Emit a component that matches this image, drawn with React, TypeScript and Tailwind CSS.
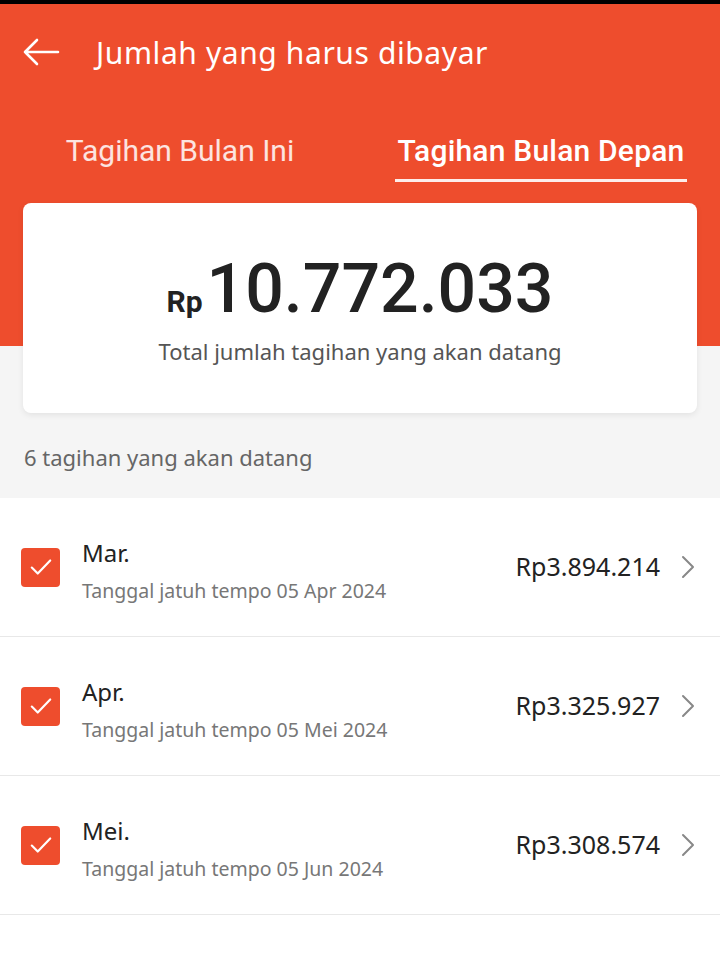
import React from "react";

const hand = { fontFamily: '"Noto Sans", "DejaVu Sans", sans-serif' };

const rows = [
  { m: "Mar.", d: "Tanggal jatuh tempo 05 Apr 2024", a: "Rp3.894.214" },
  { m: "Apr.", d: "Tanggal jatuh tempo 05 Mei 2024", a: "Rp3.325.927" },
  { m: "Mei.", d: "Tanggal jatuh tempo 05 Jun 2024", a: "Rp3.308.574" },
  { m: "Jun.", d: "Tanggal jatuh tempo 05 Jul 2024", a: "Rp1.079.880" },
];

function Check() {
  return (
    <div className="w-[39px] h-[39px] rounded-[4px] bg-[#ee4d2d] flex items-center justify-center shrink-0">
      <svg width="26" height="26" viewBox="0 0 24 24" fill="none" stroke="white" strokeWidth="2" strokeLinecap="round" strokeLinejoin="round">
        <path d="M3.5 12.5l5.5 5.5L20.5 6" />
      </svg>
    </div>
  );
}

export default function App() {
  return (
    <div className="w-[720px] h-[959px] overflow-hidden bg-[#f5f5f5] relative" style={{ fontFamily: 'Roboto, "Noto Sans", sans-serif' }}>
      <div className="h-[4px] bg-black" />
      <div className="bg-[#ee4d2d] h-[342px]">
        <div className="h-[96px] flex items-center pl-[22px]">
          <svg width="38" height="30" viewBox="0 0 38 30" fill="none" stroke="white" strokeWidth="2.6" strokeLinecap="round" strokeLinejoin="round">
            <path d="M36 15H3M15 3L3 15l12 12" />
          </svg>
          <span className="ml-[36px] text-white text-[30px] tracking-[0.6px]" style={hand}>Jumlah yang harus dibayar</span>
        </div>
        <div className="flex h-[92px]">
          <div className="w-[360px] flex justify-center pt-[33px]">
            <span className="text-[30px] leading-[36px] text-white/85">Tagihan Bulan Ini</span>
          </div>
          <div className="w-[360px] flex flex-col items-center pt-[33px] pl-[2px]">
            <span className="text-[30px] leading-[36px] text-white font-medium tracking-[0.2px]">Tagihan Bulan Depan</span>
            <div className="mt-[10px] h-[3px] w-[292px] bg-white/90" />
          </div>
        </div>
      </div>
      <div className="absolute left-[23px] top-[203px] w-[674px] h-[210px] bg-white rounded-[8px] shadow-[0_2px_6px_rgba(0,0,0,0.08)] flex flex-col items-center pt-[48px]">
        <div className="flex items-baseline text-[#222]">
          <span className="text-[30px] font-bold mr-[4px]">Rp</span>
          <span className="text-[68px] font-medium leading-[76px]">10.772.033</span>
        </div>
        <div className="mt-[8px] text-[22px] text-[#555]" style={hand}>Total jumlah tagihan yang akan datang</div>
      </div>
      <div className="h-[152px] flex items-end pl-[24px] pb-[24px]">
        <span className="text-[22px] text-[#666]" style={hand}>6 tagihan yang akan datang</span>
      </div>
      <div className="bg-white">
        {rows.map((r) => (
          <div key={r.m} className="h-[139px] border-b border-[#e8e8e8] flex items-center pl-[21px] pr-[24px]">
            <Check />
            <div className="ml-[22px] flex-1 flex flex-col mt-[8px]">
              <span className="text-[24px] text-[#222] leading-[30px]" style={hand}>{r.m}</span>
              <span className="mt-[10px] text-[19.5px] text-[#777] leading-[26px]" style={hand}>{r.d}</span>
            </div>
            <span className="text-[25px] text-[#222]" style={hand}>{r.a}</span>
            <svg className="ml-[20px]" width="16" height="26" viewBox="0 0 16 26" fill="none" stroke="#888" strokeWidth="2" strokeLinecap="round" strokeLinejoin="round">
              <path d="M3 3l10 10L3 23" />
            </svg>
          </div>
        ))}
      </div>
    </div>
  );
}
